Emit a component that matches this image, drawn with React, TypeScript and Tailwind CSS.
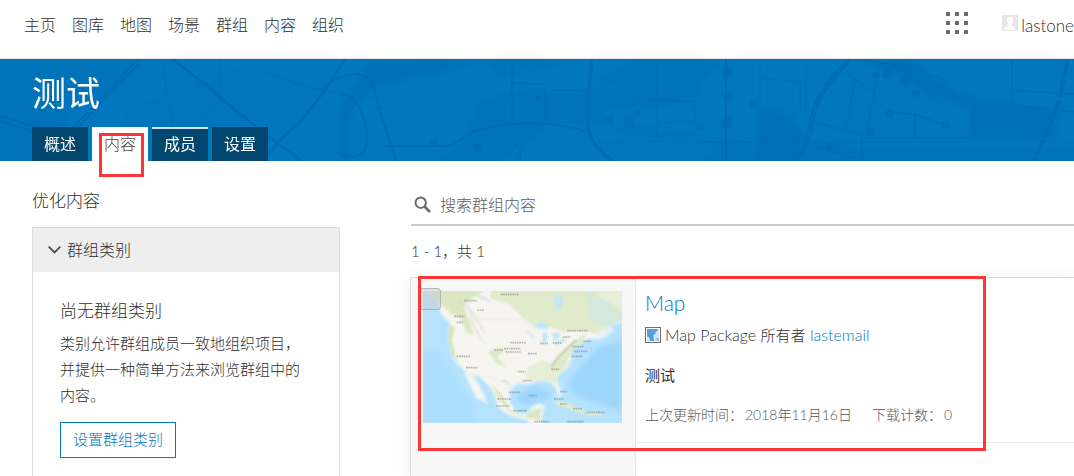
const navLinks = ["主页", "图库", "地图", "场景", "群组", "内容", "组织"];

const tabs = [
  { label: "概述" },
  { label: "内容", active: true },
  { label: "成员", hover: true },
  { label: "设置" },
];

const AppsIcon = () => (
  <svg viewBox="0 0 22 22" className="size-[22px]" fill="#6b6b6b" aria-hidden="true">
    {[0, 9, 18].map((y) => [0, 9, 18].map((x) => <rect key={`${x}-${y}`} x={x} y={y} width="4" height="4" />))}
  </svg>
);

const AvatarIcon = () => (
  <svg viewBox="0 0 16 16" className="mt-px size-4 shrink-0" aria-hidden="true">
    <rect width="16" height="16" fill="#e6e6e4" />
    <path d="M8 2C5.800 2 4.600 3.600 4.800 5.600C4.900 7.400 5.700 8.600 6.500 9.400V10.600L2.500 12.400V15H13.500V12.400L9.500 10.600V9.400C10.300 8.600 11.100 7.400 11.200 5.600C11.400 3.600 10.200 2 8 2Z" fill="#fdfdfc" />
  </svg>
);

const SearchIcon = () => (
  <svg viewBox="0 0 18 18" className="size-[18px] shrink-0" fill="none" stroke="#6a6a6a" aria-hidden="true">
    <circle cx="6.700" cy="6.700" r="5.200" strokeWidth="2" />
    <path d="M10.500 10.500L16 16" strokeWidth="2.600" />
  </svg>
);

const PackageIcon = () => (
  <svg viewBox="0 0 16 16" className="size-4 shrink-0" aria-hidden="true">
    <rect x="0.500" y="0.500" width="15" height="15" fill="#fff" stroke="#6e6e6e" />
    <rect x="2" y="2" width="12" height="12" fill="#cfe8fa" />
    <path d="M2 2H13L12 4L10 5.500L11 6.500L9 7.500L8 9L9 10.500L8 11.500L9.500 12.500L9 14H5L4.500 11L3 9.500H2Z" fill="#55a0d8" />
    <path d="M11 11L12.500 10.500L14 12V14H12.500Z" fill="#7cbbe6" />
  </svg>
);

const BannerMap = () => (
  <svg viewBox="0 59 1074 102" preserveAspectRatio="xMidYMid slice" className="absolute inset-0 size-full" fill="none" stroke="#0069ac" aria-hidden="true">
    <defs>
      <filter id="terrain">
        <feGaussianBlur stdDeviation="2" />
      </filter>
    </defs>
    <g fill="#0070b6" stroke="none" filter="url(#terrain)" opacity=".8">
      <path d="M0 59H140L105 95L70 100L60 140L30 161H0Z" opacity=".6" />
      <path d="M372 59H480L440 72L400 80L380 84L355 105L345 130L350 161H340V110Z" />
      <path d="M485 59H640L590 90L560 95L520 90L480 105L462 145L440 161H500L545 125L590 120L690 135L720 150L700 161H1074V150H900L760 140L630 138L600 110L700 100V80L720 59H580L500 75Z" opacity=".7" />
      <path d="M760 108L790 115L805 135L790 161H758Z" />
      <path d="M860 59H905L960 95L1010 105L1055 110V140L970 138V105L930 98L900 75Z" />
      <path d="M120 150L130 110L180 95L240 70L260 100L230 125L170 140Z" opacity=".4" />
    </g>
    <g strokeWidth="1.500" opacity=".65">
      <path d="M172 59L206 85L235 110L280 145L302 161" strokeWidth="2.500" />
      <path d="M345 59L325 90L302 120L280 140L262 161" strokeWidth="2.500" />
      <path d="M138 59L95 105L70 130L40 161M143 59L100 104L75 130L46 161" />
      <path d="M0 116L32 126L80 130M0 121L32 131" />
      <path d="M162 59L168 100L174 130V161M220 59V100L200 124M260 70L300 85L345 96" strokeWidth="1" opacity=".6" />
      <path d="M320 90C345 70 365 70 373 85L378 105L396 161" />
      <path d="M340 94C358 94 367 120 367 140C367 158 350 162 335 150" />
      <path d="M385 146H450L475 131Q530 115 590 132" />
      <path d="M512 59V122M512 83L545 84M545 90V120M550 90H590M510 138L520 150V161" strokeWidth="1" />
      <path d="M591 59V72L588 96V128Q594 150 614 161" strokeWidth="3" />
      <path d="M590 80H650M657 59V142M633 104V132M657 102H695V122H662M612 130V110Q620 97 635 98L695 102M600 142H1074" strokeWidth="1" opacity=".7" />
      <path d="M726 59V161" strokeWidth="2" />
      <path d="M760 59V161M700 142H726M760 78L800 82V110M806 59V110" strokeWidth="1" opacity=".6" />
      <path d="M850 59C830 80 816 96 812 120C810 137 804 151 793 161" strokeWidth="5" />
      <path d="M850 59C830 80 816 96 812 120C810 137 804 151 793 161" stroke="#0077be" strokeWidth="1" />
      <path d="M814 122L862 135V161M845 72L875 94M855 79L846 130M879 71L866 133M864 138H970M915 115V138M885 112L915 114L950 127M850 59L905 66L950 82M972 103V140M1010 90L1074 94M1012 59V105L1074 112M814 146L862 160" strokeWidth="1" />
      <path d="M1068 59L1058 105L1048 130L1034 161" strokeWidth="4" strokeDasharray="18 3" />
    </g>
    <g fill="#006cb1" stroke="none" opacity=".6">
      <circle cx="727" cy="72" r="6" /><circle cx="728" cy="98" r="5" /><circle cx="727" cy="123" r="6" /><circle cx="754" cy="104" r="4" />
      <circle cx="887" cy="74" r="5" /><circle cx="905" cy="82" r="5" /><circle cx="916" cy="93" r="4" /><circle cx="875" cy="75" r="3" />
      <circle cx="870" cy="132" r="4" /><circle cx="830" cy="146" r="4" /><circle cx="890" cy="113" r="4" /><circle cx="945" cy="125" r="4" />
      <circle cx="538" cy="98" r="3" /><circle cx="434" cy="143" r="4" /><circle cx="478" cy="147" r="4" /><circle cx="379" cy="108" r="3" />
      <circle cx="628" cy="120" r="4" /><circle cx="638" cy="113" r="3" /><circle cx="609" cy="120" r="3" /><circle cx="700" cy="127" r="4" />
    </g>
  </svg>
);

// x, y and length of each place name on the thumbnail
const labelMarks = [
  [272, 73, 54], [162, 92, 38], [202, 120, 20], [133, 139, 30], [140, 157, 18], [472, 182, 60], [458, 201, 24], [520, 214, 24],
  [390, 220, 24], [428, 219, 26], [488, 230, 32], [492, 244, 42], [484, 259, 34], [300, 218, 48], [253, 240, 28], [282, 236, 50],
  [286, 246, 46], [354, 251, 28], [140, 259, 40], [168, 293, 36], [424, 298, 24], [324, 305, 22], [338, 332, 26], [298, 367, 34],
  [262, 387, 42], [258, 408, 40], [310, 422, 42], [450, 365, 22], [432, 387, 30], [450, 402, 22], [490, 416, 26], [530, 427, 54],
  [372, 455, 44], [472, 455, 50], [356, 377, 24],
];

const MapThumbnail = () => (
  <svg viewBox="39 63 597 396" className="block h-[132px] w-[199px]" role="img" aria-label="Map">
    <defs>
      <filter id="soft" x="-5%" y="-5%" width="110%" height="110%">
        <feGaussianBlur stdDeviation="3" />
      </filter>
      <filter id="softer" x="-20%" y="-20%" width="140%" height="140%">
        <feGaussianBlur stdDeviation="8" />
      </filter>
    </defs>
    <rect x="39" y="63" width="597" height="396" fill="#b5e2fd" />
    <g filter="url(#softer)">
      <path d="M636 210L560 235L505 300L470 340L500 380L560 400L636 420Z" fill="#9dd6fc" />
      <path d="M325 375L370 350L420 365L415 390L350 405L320 395Z" fill="#9dd6fc" />
      <path d="M39 230L90 250L140 330L190 400L200 459H39Z" fill="#aee0fe" />
      <path d="M560 63H636V150L590 110Z" fill="#c5e8fb" />
    </g>
    <g filter="url(#soft)">
      <path d="M50 50L85 95L92 130L118 158L116 215L130 268L160 300L180 345L200 385L232 398L208 345L190 320L205 318L240 350L258 385L262 412L300 437L345 448L375 470H392L398 430L404 408L388 402L366 410L352 432L320 428L298 395L300 360L325 340L360 342L382 332L420 335L438 355L446 380L456 372L444 338L442 318L475 290L486 262L483 240L505 225L535 205L570 208L612 182L600 165L650 155V50Z" fill="#f6f5f0" stroke="#d5eefb" strokeWidth="5" />
      <path d="M50 50L85 95L120 128L150 145L170 185L190 195L180 155L160 110L185 85L250 50Z" fill="#dae7c2" />
      <path d="M250 50L240 85L300 105L340 145L380 175L420 170L460 185L510 180L560 190L600 165L650 150V50Z" fill="#dfebca" />
      <path d="M560 50H650V120L600 100L570 80Z" fill="#e6efd8" />
      <path d="M118 160L135 175L125 210L138 265L155 290L125 255L116 215Z" fill="#d3e4ba" />
      <path d="M232 245L262 232L285 240L260 262L290 290L262 282Z" fill="#dce9c6" />
      <path d="M355 290L400 270L425 285L480 250L460 300L440 320L445 345L415 330L365 335L345 315Z" fill="#e6eed6" />
      <path d="M425 285L498 210L530 190L520 215L485 240L470 285L430 310Z" fill="#e0ebcb" />
      <path d="M215 320L245 345L268 390L300 425L345 442L388 452L396 415L368 420L345 440L300 420L275 370Z" fill="#dae8bf" />
      <path d="M430 395Q470 390 500 415L530 425L515 432L480 418L440 405ZM530 425L575 427L570 437L535 435Z" fill="#e3ecc9" />
      <g fill="#c0e6fb">
        <path d="M372 172L392 152L418 170L412 178Z" />
        <path d="M396 215L398 190L410 185L415 200L404 222Z" />
        <path d="M425 190L448 188L450 200L432 215Z" />
        <path d="M432 80L455 76L458 108L446 122L436 100Z" />
        <path d="M430 219L465 205L470 212L440 226Z" />
        <path d="M530 50L550 75L600 95L640 140V165L610 150L600 165L610 185L560 200L590 170L540 150Z" opacity=".35" />
      </g>
      <path d="M150 95L180 125L190 165L222 220M172 105L195 140L225 190" fill="none" stroke="#b3b7a6" strokeWidth="3" strokeDasharray="7 6" />
      <path d="M424 290L445 260L498 210" fill="none" stroke="#a8ab9b" strokeWidth="4" />
      <path d="M200 78Q225 82 242 95M350 182L372 205M272 333Q290 332 302 345" fill="none" stroke="#a9c9dc" strokeWidth="3" />
      <path d="M190 148H330L390 190M175 310L215 322L245 320L270 345" fill="none" stroke="#e3dce0" strokeWidth="2" />
    </g>
    <g stroke="#77776f" strokeWidth="5" strokeDasharray="5 2" opacity=".5">
      {labelMarks.map(([x, y, width]) => (
        <path key={`${x}-${y}`} d={`M${x} ${y}h${width}`} />
      ))}
    </g>
  </svg>
);

const Header = () => (
  <header className="flex h-[59px] items-start justify-between border-b border-[#e3e3e3] bg-white pl-6">
    <nav className="flex gap-4 pt-[13px] text-base leading-6">
      {navLinks.map((label) => (
        <a key={label} href="#">{label}</a>
      ))}
    </nav>
    <div className="flex items-start">
      <button type="button" aria-label="应用程序" className="mt-3 mr-[34px]"><AppsIcon /></button>
      <a href="#" className="flex items-start gap-[3px] pt-3.5 text-[17px] leading-6"><AvatarIcon />lastone</a>
    </div>
  </header>
);

const Banner = () => (
  <section className="relative bg-[#0077be] px-8 text-white">
    <BannerMap />
    <div className="relative font-normal">
      <h1 className="pt-2.5 pb-2.5 text-[34px] leading-[48px]">测试</h1>
      <nav className="flex gap-1">
        {tabs.map(({ label, active, hover }) => (
          <a
            key={label}
            href="#"
            className={`relative h-[34px] border-t-2 px-3 text-base leading-[30px] ${active ? "border-white bg-white font-light text-[#404040]" : "bg-[#00466f]"} ${hover ? "border-[#d5e4ee]" : active ? "" : "border-[#00466f]"}`}
          >
            {label}
            {active && <span className="absolute top-1 left-[7px] h-11 w-[45px] border-3 border-[#fc3535]" />}
          </a>
        ))}
      </nav>
    </div>
  </section>
);

const Sidebar = () => (
  <aside className="w-[308px] shrink-0">
    <h2 className="pt-7 text-[17px] leading-6">优化内容</h2>
    <div className="mt-3.5 border border-[#dcdcdc] pb-10">
      <button type="button" className="flex h-11 w-full items-center gap-1.5 bg-[#eee] pl-[15px] text-base">
        <svg viewBox="0 0 13 8" className="h-2 w-[13px]" fill="none" stroke="#4c4c4c" strokeWidth="1.800" aria-hidden="true">
          <path d="M0.700 0.700L6.500 6.500L12.300 0.700" />
        </svg>
        群组类别
      </button>
      <div className="px-[27px] pt-[26px]">
        <h3 className="text-[17px] leading-[26px]">尚无群组类别</h3>
        <p className="mt-1.5 text-[15px] leading-[26px]">类别允许群组成员一致地组织项目，并提供一种简单方法来浏览群组中的内容。</p>
        <button type="button" className="mt-3.5 h-9 border border-[#0079c1] px-3 pb-0.5 text-[15px] text-[#0079c1]">设置群组类别</button>
      </div>
    </div>
  </aside>
);

const ItemCard = () => (
  <article className="relative flex border-t border-l border-[#dcdcdc] shadow-[0_0_16px_rgba(0,0,0,0.06)]">
    <div className="relative w-[225px] shrink-0 border-r border-[#e8e8e8] bg-[#f7f7f7] pt-[13px] pb-14 pl-3">
      <MapThumbnail />
      <input type="checkbox" aria-label="选择 Map" className="absolute top-2.5 left-2 h-[22px] w-[22px] appearance-none rounded-sm border border-[#a5a5a5]/70 bg-[#cccccc]/50" />
    </div>
    <div className="min-w-0 grow bg-white">
      <div className="h-[165px] border-b border-[#e8e8e8] pt-[11px] pl-[9px]">
        <h3 className="text-[21px] leading-7"><a href="#" className="text-[#0079c1]">Map</a></h3>
        <p className="mt-1.5 flex items-center gap-1 text-base leading-6">
          <PackageIcon />
          <span>Map Package <span className="text-[15px]">所有者</span> <a href="#" className="text-[#0079c1]">lastemail</a></span>
        </p>
        <p className="mt-4 text-[15px] leading-6 font-normal">测试</p>
        <p className="mt-4 flex gap-5 text-sm leading-6 text-[#5a5a5a]">
          <span className="flex gap-0.5"><span>上次更新时间：</span><time dateTime="2018-11-16">2018年11月16日</time></span>
          <span className="flex gap-0.5"><span>下载计数：</span><span>0</span></span>
        </p>
      </div>
    </div>
    <span className="pointer-events-none absolute -top-0.5 left-[7px] h-[175px] w-[568px] border-3 border-[#fc3535]" />
  </article>
);

const Results = () => (
  <main className="min-w-0 grow pt-[26px]">
    <label className="ml-px flex h-[39px] items-center gap-2 border-b-2 border-[#cacaca] pb-0.5 pl-[3px]">
      <SearchIcon />
      <input type="search" aria-label="搜索群组内容" placeholder="搜索群组内容" className="grow bg-transparent text-base outline-none placeholder:text-[#5f5f5f]" />
    </label>
    <p className="py-3.5 pl-px text-[15px] leading-[23px]">1 - 1，共 1</p>
    <ItemCard />
  </main>
);

export default function App() {
  return (
    <div className="h-screen overflow-hidden bg-white font-['Lato','Noto_Sans_CJK_SC',sans-serif] font-light text-[#303030]">
      <Header />
      <Banner />
      <div className="flex gap-[70px] pl-8">
        <Sidebar />
        <Results />
      </div>
    </div>
  );
}
